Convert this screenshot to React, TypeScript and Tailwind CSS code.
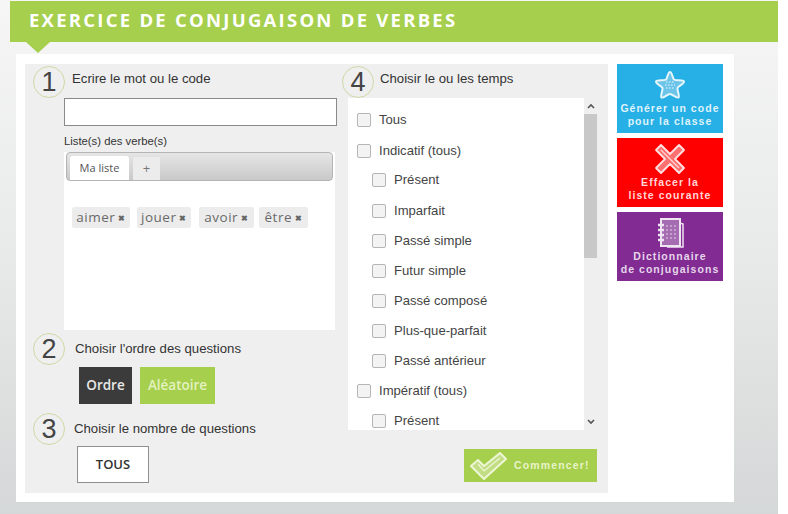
const sans = "font-['Liberation_Sans',Arial,sans-serif]";
const open = "font-['Open_Sans','Noto_Sans',sans-serif]";

function Num({ n }: { n: number }) {
  return (
    <div className={`w-[32px] h-[32px] shrink-0 rounded-full border-[1.5px] border-[#cddaa6] flex items-center justify-center text-[27px] leading-none text-[#444] ${sans}`}>
      {n}
    </div>
  );
}

function Chip({ t, c }: { t: string; c: string }) {
  return (
    <div className={`h-[21px] ${c} bg-[#ececec] rounded-[2px] flex items-center justify-center gap-[3px] text-[#6a6a6a] text-[13.5px] tracking-[0.5px] ${open}`}>
      <span>{t}</span>
      <span className="text-[8px] text-[#666] font-bold">✖</span>
    </div>
  );
}

function Row({ t, sub, m }: { t: string; sub?: boolean; m?: string }) {
  return (
    <div className={`flex items-center h-[30px] ${m ?? ""} ${sub ? "pl-[24px]" : "pl-[9px]"}`}>
      <span className="w-[14px] h-[14px] rounded-[2px] border border-[#b5b5b5] bg-[#f3f3f3] shrink-0" />
      <span className={`ml-[8px] text-[13.1px] text-[#444] ${sans}`}>{t}</span>
    </div>
  );
}

function Side({ c, l1, l2, icon, t }: { c: string; l1: string; l2: string; icon: React.ReactNode; t: string }) {
  return (
    <div className={`w-[106px] h-[69px] ${c} flex flex-col items-center`}>
      <div className="h-[38px] flex items-center justify-center pt-[3px]">{icon}</div>
      <div className={`text-[10.5px] leading-[12.5px] font-bold tracking-[1.05px] text-center whitespace-nowrap ${t} ${sans}`}>
        {l1}
        <br />
        {l2}
      </div>
    </div>
  );
}

export default function App() {
  return (
    <div className="w-[788px] h-[514px] overflow-hidden bg-white">
      <div className="w-[778px] h-[514px] bg-gradient-to-b from-[#f6f6f6] via-[#e8e9e9] to-[#d5d8d8] pt-[1px]">
        <div className="ml-[10px] w-[768px] h-[41px] bg-[#a5cf4c] flex items-center pl-[19px] pb-[4px]">
          <span className={`text-white font-bold text-[18.5px] tracking-[2.25px] ${open}`}>EXERCICE DE CONJUGAISON DE VERBES</span>
        </div>
        <div className="relative ml-[16px] w-[718px] h-[448px] mt-[12px] bg-white p-[9px]">
          <div className="absolute left-[10px] top-[-12px] w-0 h-0 border-l-[12px] border-r-[12px] border-t-[11px] border-l-transparent border-r-transparent border-t-[#a5cf4c]" />
          <div className="flex gap-[9px] items-start pt-[1px]">
            <div className="w-[583px] h-[429px] bg-[#efefef] flex">
              {/* left */}
              <div className="w-[323px] pl-[8px] pt-[2px]">
                <div className="flex items-start">
                  <Num n={1} />
                  <span className={`ml-[7px] mt-[3px] text-[13.2px] text-[#333] ${sans}`}>Ecrire le mot ou le code</span>
                </div>
                <div className="ml-[31px] w-[273px] h-[28px] bg-white border border-[#8a8a8a]" />
                <div className={`ml-[31px] mt-[8px] text-[11.3px] leading-[14px] text-[#333] ${sans}`}>Liste(s) des verbe(s)</div>
                <div className="ml-[31px] mt-[4px] w-[271px] h-[178px] bg-white">
                  <div className="mx-[2px] h-[29px] w-[267px] rounded-[4px] border border-[#b5b5b5] bg-gradient-to-b from-[#e6e6e6] to-[#c9c9c9] flex items-end pl-[3px]">
                    <div className={`w-[59px] h-[24px] bg-white rounded-t-[3px] flex items-center justify-center text-[11px] text-[#555] ${open}`}>Ma liste</div>
                    <div className={`ml-[4px] w-[27px] h-[23px] bg-[#ececec] flex items-center justify-center text-[13px] text-[#777] ${open}`}>+</div>
                  </div>
                  <div className="flex ml-[8px] mt-[26px]">
                    <Chip t="aimer" c="w-[58px]" />
                    <Chip t="jouer" c="w-[54px] ml-[7px]" />
                    <Chip t="avoir" c="w-[55px] ml-[8px]" />
                    <Chip t="être" c="w-[49px] ml-[5px]" />
                  </div>
                </div>
                <div className="flex items-start mt-[3px]">
                  <Num n={2} />
                  <span className={`ml-[10px] mt-[6px] text-[13.2px] text-[#333] ${sans}`}>Choisir l'ordre des questions</span>
                </div>
                <div className={`flex gap-[8px] ml-[46px] mt-[2px] text-[13.5px] font-semibold ${open}`}>
                  <div className="w-[53px] h-[37px] bg-[#3b3b3b] text-[#e8e8e8] flex items-center justify-center">Ordre</div>
                  <div className="w-[75px] h-[37px] bg-[#a5cf4c] text-[#e4f2c0] flex items-center justify-center">Aléatoire</div>
                </div>
                <div className="flex items-start mt-[9px]">
                  <Num n={3} />
                  <span className={`ml-[9px] mt-[6px] text-[13.2px] text-[#333] ${sans}`}>Choisir le nombre de questions</span>
                </div>
                <div className={`ml-[44px] mt-[1px] w-[72px] h-[37px] bg-white border border-[#8f8f8f] flex items-center justify-center text-[13px] font-semibold text-[#333] ${open}`}>TOUS</div>
              </div>
              {/* right */}
              <div className="w-[260px] pt-[2px]">
                <div className="flex items-start -ml-[6px]">
                  <Num n={4} />
                  <span className={`ml-[6px] mt-[3px] text-[13.2px] text-[#333] ${sans}`}>Choisir le ou les temps</span>
                </div>
                <div className="flex">
                  <div className="w-[236px] h-[332px] bg-white pt-[7px] overflow-hidden">
                    <Row t="Tous" />
                    <Row t="Indicatif (tous)" m="mt-[1px]" />
                    <Row t="Présent" sub m="-mt-[1px]" />
                    <Row t="Imparfait" sub m="mt-[1px]" />
                    <Row t="Passé simple" sub />
                    <Row t="Futur simple" sub />
                    <Row t="Passé composé" sub />
                    <Row t="Plus-que-parfait" sub />
                    <Row t="Passé antérieur" sub />
                    <Row t="Impératif (tous)" />
                    <Row t="Présent" sub />
                  </div>
                  <div className="w-[13px] h-[332px] flex flex-col items-center">
                    <div className="h-[16px] w-full flex items-center justify-center">
                      <svg width="8" height="6" viewBox="0 0 8 6"><path d="M1 5 L4 2 L7 5" fill="none" stroke="#555" strokeWidth="1.6" /></svg>
                    </div>
                    <div className="w-full h-[144px] bg-[#c8c8c8]" />
                    <div className="flex-1" />
                    <div className="h-[16px] w-full flex items-center justify-center">
                      <svg width="8" height="6" viewBox="0 0 8 6"><path d="M1 1 L4 4 L7 1" fill="none" stroke="#555" strokeWidth="1.6" /></svg>
                    </div>
                  </div>
                </div>
                <div className="mt-[19px] ml-[116px] w-[133px] h-[33px] bg-[#a5cf4c] flex items-center pl-[5px]">
                  <svg width="38" height="30" viewBox="0 0 38 30" className="shrink-0">
                    <path d="M2 15 L9 9 L15 15 L31 2 L37 8 L15 28 Z" fill="#c2de84" stroke="#eef6d6" strokeWidth="2" strokeLinejoin="round" />
                    <path d="M9 13 L15 20 L31 7" fill="none" stroke="#eef6d6" strokeWidth="1.2" />
                  </svg>
                  <span className={`ml-[7px] text-[10.5px] font-bold tracking-[1.15px] text-[#e8f3c8] ${sans}`}>Commencer!</span>
                </div>
              </div>
            </div>
            {/* side */}
            <div className="flex flex-col gap-[5px]">
              <Side
                c="bg-[#27b0e6]"
                t="text-[#dff3fb]"
                l1="Générer un code"
                l2="pour la classe"
                icon={
                  <svg width="32" height="32" viewBox="0 0 32 32">
                    <path d="M16 3 C18 3 18.5 9 20 10.5 C22 12 29 10.5 30 12.5 C30.5 15 24 17 23.5 19 C23 21.5 26 27 24.5 28.5 C22.5 29.5 18 25 16 25 C13.5 25 9.5 29.5 7.5 28.5 C6 27 9 21.5 8.5 19 C8 17 1.5 15 2 12.5 C3 10.5 10 12 12 10.5 C13.5 9 14 3 16 3 Z" fill="#6cc4e8" stroke="#e6f6fc" strokeWidth="2" strokeLinejoin="round" />
                    <path d="M12 13 L20 13 M11 16 L21 16 M12 19 L20 19" stroke="#bfe6f6" strokeWidth="1.6" strokeDasharray="1.5 1.5" />
                  </svg>
                }
              />
              <Side
                c="bg-[#ff0000]"
                t="text-[#ffd6d6]"
                l1="Effacer la"
                l2="liste courante"
                icon={
                  <svg width="32" height="32" viewBox="0 0 32 32">
                    <path d="M7 2 L16 11 L25 2 L30 7 L21 16 L30 25 L25 30 L16 21 L7 30 L2 25 L11 16 L2 7 Z" fill="#ff7070" stroke="#ffe0e0" strokeWidth="1.8" strokeLinejoin="round" />
                    <path d="M7 7 L25 25" stroke="#ffd0d0" strokeWidth="1.5" />
                  </svg>
                }
              />
              <Side
                c="bg-[#812b93]"
                t="text-[#e6d6ea]"
                l1="Dictionnaire"
                l2="de conjugaisons"
                icon={
                  <svg width="30" height="32" viewBox="0 0 30 32">
                    <rect x="6" y="2" width="19" height="27" fill="#a56cb2" stroke="#efe4f2" strokeWidth="2" />
                    <path d="M25 6 L28 7 V30 H12" fill="none" stroke="#efe4f2" strokeWidth="1.5" />
                    <path d="M3 8 H9 M3 13 H9 M3 18 H9 M3 23 H9" stroke="#efe4f2" strokeWidth="2.4" />
                    <path d="M12 8 V24 M16 8 V24 M20 8 V24" stroke="#d9c3df" strokeWidth="1.2" strokeDasharray="2 2" />
                  </svg>
                }
              />
            </div>
          </div>
        </div>
      </div>
    </div>
  );
}
